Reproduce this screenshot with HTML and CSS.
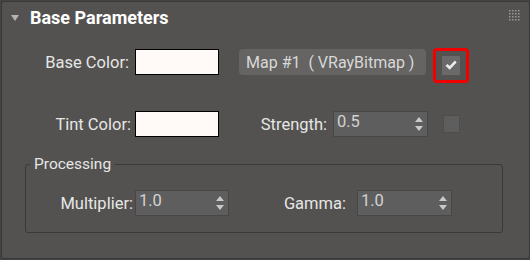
FILE: index.html
```html
<!DOCTYPE html>
<html>
<head>
<meta charset="utf-8">
<link rel="stylesheet" href="styles.css">
</head>
<body>
<div class="panel">
  <div class="header">
    <span class="tri"></span>
    <span class="title">Base Parameters</span>
    <svg class="grip" width="11" height="11" viewBox="0 0 11 11">
      <g fill="#9a9a9a">
        <rect x="0" y="0" width="1.5" height="1.5"/><rect x="3" y="0" width="1.5" height="1.5"/><rect x="6" y="0" width="1.5" height="1.5"/><rect x="9" y="0" width="1.5" height="1.5"/>
        <rect x="0" y="3" width="1.5" height="1.5"/><rect x="3" y="3" width="1.5" height="1.5"/><rect x="6" y="3" width="1.5" height="1.5"/><rect x="9" y="3" width="1.5" height="1.5"/>
        <rect x="0" y="6" width="1.5" height="1.5"/><rect x="3" y="6" width="1.5" height="1.5"/><rect x="6" y="6" width="1.5" height="1.5"/><rect x="9" y="6" width="1.5" height="1.5"/>
        <rect x="0" y="9" width="1.5" height="1.5"/><rect x="3" y="9" width="1.5" height="1.5"/><rect x="6" y="9" width="1.5" height="1.5"/><rect x="9" y="9" width="1.5" height="1.5"/>
      </g>
    </svg>
  </div>

  <div class="row row1">
    <span class="label lab-main">Base Color:</span>
    <span class="swatch"></span>
    <span class="mapbtn">Map #1 &nbsp;( VRayBitmap )</span>
    <span class="highlight">
      <span class="check">
        <svg width="12" height="11" viewBox="0 0 12 11"><path d="M0.5 5.8 L2.6 3.9 L4.7 6 L9.9 0.6 L11.6 2.4 L4.7 9.8 Z" fill="#ededed"/></svg>
      </span>
    </span>
  </div>

  <div class="row row2">
    <span class="label lab-main lab-tint">Tint Color:</span>
    <span class="swatch"></span>
    <span class="label lab-strength">Strength:</span>
    <span class="spinner sp-strength">
      <span class="val">0.5</span>
      <svg class="arrows" width="8" height="15" viewBox="0 0 8 15"><path d="M4 0 L8 5 L0 5 Z M0 9 L8 9 L4 14 Z" fill="#c9c9c9"/></svg>
    </span>
    <span class="smallbox"></span>
  </div>

  <fieldset class="group">
    <legend>Processing</legend>
    <div class="row row3">
      <span class="label lab-mult">Multiplier:</span>
      <span class="spinner sp-mult">
        <span class="val">1.0</span>
        <svg class="arrows" width="8" height="15" viewBox="0 0 8 15"><path d="M4 0 L8 5 L0 5 Z M0 9 L8 9 L4 14 Z" fill="#c9c9c9"/></svg>
      </span>
      <span class="label lab-gamma">Gamma:</span>
      <span class="spinner sp-gamma">
        <span class="val">1.0</span>
        <svg class="arrows" width="8" height="15" viewBox="0 0 8 15"><path d="M4 0 L8 5 L0 5 Z M0 9 L8 9 L4 14 Z" fill="#c9c9c9"/></svg>
      </span>
    </div>
  </fieldset>
</div>
</body>
</html>
```

FILE: styles.css
```css
* { box-sizing: border-box; }
html, body {
  margin: 0;
  padding: 0;
  background: #444444;
  width: 530px;
  height: 260px;
  overflow: hidden;
}
body {
  font-family: Roboto, "Noto Sans", sans-serif;
  font-size: 16.5px;
  color: #e6e6e6;
}
.panel {
  margin: 1px 0 0 1px;
  width: 529px;
  height: 258px;
  background: #535250;
  border: 1px solid #383838;
  border-radius: 3px;
}
.header {
  height: 30px;
  display: flex;
  align-items: center;
}
.tri {
  width: 0;
  height: 0;
  margin-left: 9px;
  border-left: 4px solid transparent;
  border-right: 4px solid transparent;
  border-top: 6px solid #b3b3b3;
  margin-top: 1px;
}
.title {
  margin-left: 11px;
  font-weight: bold;
  font-size: 18px;
  color: #ffffff;
}
.grip {
  margin-left: auto;
  margin-right: 9px;
  align-self: flex-start;
  margin-top: 8px;
}
.row {
  display: flex;
  align-items: center;
  height: 26px;
}
.row1 { margin-top: 17px; }
.row2 { margin-top: 36px; }
.label {
  text-align: right;
  white-space: nowrap;
  flex: none;
}
.lab-main { width: 127px; }
.lab-tint { width: 129px; }
.swatch {
  width: 84px;
  height: 26px;
  margin-left: 6px;
  background: #fffaf7;
  border: 1px solid #000000;
  flex: none;
}
.lab-tint + .swatch { margin-left: 4px; }
.mapbtn {
  margin-left: 20px;
  width: 187px;
  height: 26px;
  background: #656463;
  border-radius: 4px;
  color: #d8d8d8;
  padding-left: 7px;
  display: flex;
  align-items: center;
  white-space: nowrap;
  flex: none;
  font-size: 16px;
}
.highlight {
  margin-left: 7px;
  width: 36px;
  height: 35px;
  border: 3px solid #f20000;
  border-radius: 4px;
  align-self: flex-start;
  margin-top: -1px;
  display: flex;
  align-items: center;
  justify-content: center;
  flex: none;
}
.check {
  width: 18px;
  height: 19px;
  background: #6a6a6a;
  display: flex;
  align-items: center;
  justify-content: center;
}
.lab-strength { width: 108px; }
.spinner {
  height: 26px;
  background: #5f5e5e;
  border: 1px solid #474747;
  display: flex;
  align-items: flex-start;
  padding-left: 3px;
  padding-right: 4px;
  color: #d2d2d2;
  flex: none;
}
.val { line-height: 20px; }
.arrows { margin-left: auto; align-self: center; }
.sp-strength { margin-left: 6px; width: 95px; }
.smallbox {
  margin-left: 15px;
  width: 17px;
  height: 18px;
  background: #5f5e5e;
  border: 1px solid #4d4d4d;
  flex: none;
}
.group {
  margin: 18px 0 0 23px;
  width: 478px;
  height: 78px;
  padding: 0;
  border: 1px solid #3a3a3a;
  border-radius: 3px;
}
.group legend {
  margin-left: 4px;
  padding: 0 4px;
  line-height: 18px;
  font-size: 15.5px;
  color: #e6e6e6;
}
.row3 { margin-top: 17px; }
.lab-mult { width: 107px; }
.sp-mult { margin-left: 2px; width: 94px; }
.lab-gamma { width: 117px; }
.sp-gamma { margin-left: 11px; width: 95px; }
```
